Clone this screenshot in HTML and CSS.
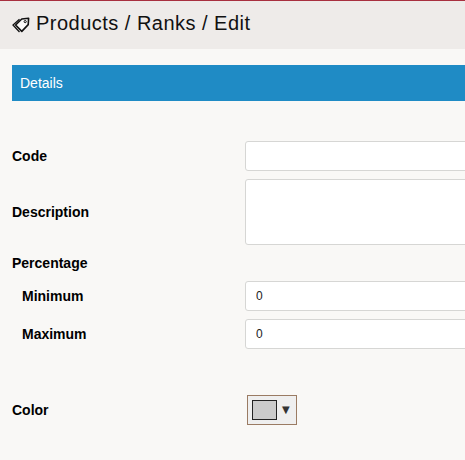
FILE: index.html
```html
<!DOCTYPE html>
<html lang="en">
<head>
<meta charset="utf-8">
<title>Products / Ranks / Edit</title>
<link rel="stylesheet" href="styles.css">
</head>
<body>
<header class="page-header">
  <svg class="tag-icon" width="20" height="18" viewBox="0 0 20 18" aria-hidden="true">
    <path d="M7.5 4.2 L1 10 L7.5 17" fill="none" stroke="#111" stroke-width="1.3"/>
    <path d="M3.6 10 L9.8 4 L16.6 3.2 L16.2 9.6 L9.8 16.4 Z" fill="#fbfaf9" stroke="#111" stroke-width="1.6" stroke-linejoin="round"/>
    <circle cx="13.2" cy="6.6" r="1.1" fill="none" stroke="#111" stroke-width="1"/>
  </svg>
  <h1 class="page-title">Products / Ranks / Edit</h1>
</header>
<main class="content">
  <div class="section-bar">Details</div>
  <form class="form">
    <div class="row row-code">
      <label class="label">Code</label>
      <input class="field" type="text">
    </div>
    <div class="row row-desc">
      <label class="label">Description</label>
      <textarea class="field area"></textarea>
    </div>
    <div class="group-title">Percentage</div>
    <div class="row row-min">
      <label class="label sub">Minimum</label>
      <input class="field" type="text" value="0">
    </div>
    <div class="row row-max">
      <label class="label sub">Maximum</label>
      <input class="field" type="text" value="0">
    </div>
    <div class="row row-color">
      <label class="label">Color</label>
      <button class="color-btn" type="button"><span class="swatch"></span><span class="arrow">▼</span></button>
    </div>
  </form>
</main>
</body>
</html>
```
FILE: styles.css
```css
* { box-sizing: border-box; }
html, body { margin: 0; height: 460px; overflow: hidden; }
body {
  background: #f9f8f6;
  color: #000;
  font-family: "Liberation Sans", Arial, sans-serif;
  font-size: 14px;
  width: 465px;
}
.page-header {
  height: 49px;
  background: #eeebe9;
  border-top: 1px solid #a8303f;
  display: flex;
  align-items: center;
  padding: 0 0 3px 12px;
}
.tag-icon { flex: none; margin-right: 4px; }
.page-title { margin: 0; font-size: 20px; font-weight: 400; letter-spacing: 0.48px; color: #111; }
.content { padding: 16px 0 0 12px; }
.section-bar {
  height: 36px;
  width: 500px;
  background: #1f8bc5;
  color: #fff;
  padding-left: 8px;
  line-height: 36px;
  font-size: 14px;
}
.form { padding-top: 40px; }
.row {
  display: grid;
  grid-template-columns: 233px 400px;
  align-items: center;
  margin-bottom: 8px;
}
.label { font-weight: 700; font-size: 14px; }
.label.sub { padding-left: 10px; }
.group-title { font-weight: 700; font-size: 14px; line-height: 16px; margin: 10px 0 10px; }
.field {
  display: block;
  width: 400px;
  height: 30px;
  background: #fff;
  border: 1px solid #d6d6d4;
  border-radius: 3px;
  padding: 0 10px;
  font-family: "Liberation Sans", Arial, sans-serif;
  font-size: 12px;
  color: #222;
  outline: none;
}
.area { height: 66px; resize: none; }
.row-color { margin-top: 46px; }
.color-btn {
  margin-left: 2px;
  width: 50px;
  height: 30px;
  background: #efefef;
  border: 1px solid #9a7b63;
  padding: 0 0 0 4px;
  display: flex;
  align-items: center;
}
.swatch {
  width: 25px;
  height: 20px;
  background: #cbcbcb;
  border: 1px solid #222;
}
.arrow { font-size: 10px; color: #333; margin-left: 5px; line-height: 1; font-family: "DejaVu Sans", sans-serif; }
```
